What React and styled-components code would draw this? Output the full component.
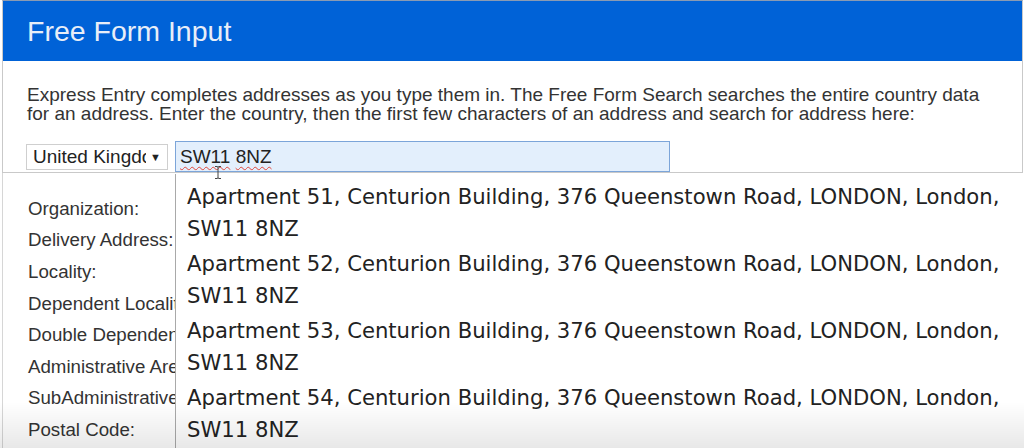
/* eslint-disable */
// Free form address search with the suggestion list open
import React, { useState } from 'react';
import styled, { createGlobalStyle } from 'styled-components';

const GlobalStyle = createGlobalStyle`
  html, body {
    margin: 0;
    padding: 0;
    background: #ffffff;
  }
  body {
    font-family: "Liberation Sans", Arial, sans-serif;
    color: #333333;
  }
`;

const Page = styled.div`
  position: relative;
  width: 1024px;
  height: 448px;
  overflow: hidden;
  background: #ffffff;
`;

const Panel = styled.section`
  margin-left: 2px;
  width: 1021px;
  box-sizing: border-box;
  border: 1px solid #c9c9c9;
  border-top-color: #8a9bb3;
`;

const Header = styled.div`
  height: 60px;
  display: flex;
  align-items: center;
  padding-left: 24px;
  background: #0062d7;
`;

const Title = styled.h2`
  margin: 0;
  font-size: 28.5px;
  font-weight: normal;
  color: #e8eef8;
`;

const Body = styled.div`
  padding: 25px 24px 0 23px;
`;

const Intro = styled.p`
  margin: 0 0 18px 1px;
  font-size: 19px;
  line-height: 18.5px;
  color: #333333;
`;

const SearchRow = styled.div`
  display: flex;
  align-items: center;
  gap: 7px;
`;

const CountrySelect = styled.div`
  width: 142px;
  height: 26px;
  box-sizing: border-box;
  display: flex;
  align-items: center;
  padding: 0 6px 0 6px;
  border: 1px solid #cfcfcf;
  background: #ffffff;
  font-size: 19px;
  color: #222222;
`;

const SelectText = styled.span`
  flex: 1;
  overflow: hidden;
  white-space: nowrap;
`;

const Caret = styled.span`
  margin-left: 4px;
  font-size: 11px;
  color: #222222;
`;

const SearchInput = styled.div`
  width: 495px;
  height: 31px;
  box-sizing: border-box;
  display: flex;
  align-items: center;
  padding-left: 4px;
  border: 1px solid #7ca5d9;
  background: #e3effc;
  font-size: 19px;
  color: #222222;
`;

const Misspelt = styled.span`
  text-decoration: underline wavy #e0453a;
  text-decoration-thickness: 1px;
  text-underline-offset: 3px;
`;

const Fields = styled.div`
  margin-left: 2px;
  padding: 20px 0 0 25px;
  border-left: 1px solid #d6d6d6;
  height: 300px;
`;

const FieldLabel = styled.div`
  height: 31.6px;
  display: flex;
  align-items: center;
  font-size: 18.7px;
  color: #333333;
  white-space: nowrap;
`;

const Suggestions = styled.ul`
  position: absolute;
  left: 175px;
  top: 174px;
  width: 866px;
  height: 300px;
  margin: 0;
  padding: 5px 0 0 11px;
  box-sizing: border-box;
  list-style: none;
  background: #ffffff;
  border-left: 1px solid #a9a9a9;
`;

const Suggestion = styled.li`
  padding: 2px 0 1px;
  font-family: "DejaVu Sans", Verdana, sans-serif;
  font-size: 21.15px;
  line-height: 32px;
  color: #222222;
  background: ${(p) => (p.active ? '#eef4fc' : 'transparent')};
  cursor: pointer;
`;

const Fade = styled.div`
  position: absolute;
  left: 0;
  right: 0;
  bottom: 0;
  height: 46px;
  pointer-events: none;
  background: linear-gradient(to bottom, rgba(0, 0, 0, 0), rgba(0, 0, 0, 0.09));
`;

const Cursor = styled.svg`
  position: absolute;
  left: 214px;
  top: 166px;
  pointer-events: none;
`;

const labels = [
  'Organization:',
  'Delivery Address:',
  'Locality:',
  'Dependent Locality:',
  'Double Dependent Locality:',
  'Administrative Area:',
  'SubAdministrative Area:',
  'Postal Code:',
];

const addresses = [51, 52, 53, 54].map(
  (n) => `Apartment ${n}, Centurion Building, 376 Queenstown Road, LONDON, London, SW11 8NZ`
);

export default function App() {
  const [hovered, setHovered] = useState(-1);

  return (
    <Page>
      <GlobalStyle />
      <Panel>
        <Header>
          <Title>Free Form Input</Title>
        </Header>
        <Body>
          <Intro>
            Express Entry completes addresses as you type them in. The Free Form Search searches the entire country data
            for an address. Enter the country, then the first few characters of an address and search for address here:
          </Intro>
          <SearchRow>
            <CountrySelect>
              <SelectText>United Kingdom</SelectText>
              <Caret>▼</Caret>
            </CountrySelect>
            <SearchInput>
              <Misspelt>SW11</Misspelt>&nbsp;<Misspelt>8NZ</Misspelt>
            </SearchInput>
          </SearchRow>
        </Body>
      </Panel>

      <Fields>
        {labels.map((l) => <FieldLabel key={l}>{l}</FieldLabel>)}
      </Fields>

      <Suggestions>
        {addresses.map((a, i) => (
          <Suggestion
            key={a}
            active={hovered === i}
            onMouseEnter={() => setHovered(i)}
            onMouseLeave={() => setHovered(-1)}
          >
            {a}
          </Suggestion>
        ))}
      </Suggestions>

      <Cursor width="8" height="13" viewBox="0 0 8 13">
        <path d="M1 0.5 H3 Q4 0.5 4 1.5 V11.5 Q4 12.5 3 12.5 H1 M7 0.5 H5 Q4 0.5 4 1.5 M4 11.5 Q4 12.5 5 12.5 H7" fill="none" stroke="#444" strokeWidth="1" />
      </Cursor>

      <Fade />
    </Page>
  );
}
